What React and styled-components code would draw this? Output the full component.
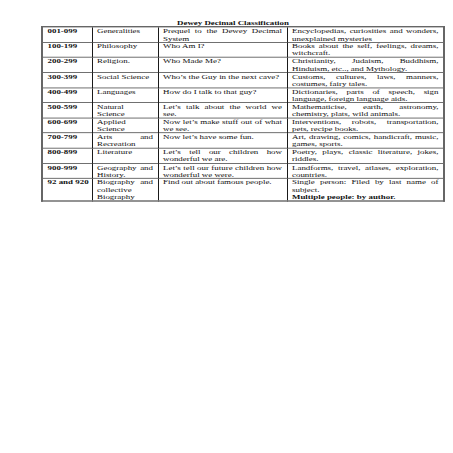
import React from "react";
import styled, { createGlobalStyle } from "styled-components";

const GlobalStyle = createGlobalStyle`
  html, body {
    margin: 0;
    padding: 0;
    background: #ffffff;
  }
`;

const Page = styled.div`
  width: 453px;
  height: 453px;
  padding: 19px 0 0 41px;
  box-sizing: border-box;
  overflow: hidden;
`;

// the source scan is squashed vertically, so the sheet is too
const Sheet = styled.div`
  width: 402px;
  transform: scaleY(0.7);
  transform-origin: top left;
  font-family: "Liberation Serif", "Times New Roman", serif;
  color: #111;
`;

const Title = styled.div`
  font-size: 8.9px;
  line-height: 10.3px;
  font-weight: bold;
  text-align: center;
  padding-right: 18px;
`;

const Table = styled.table`
  width: 402px;
  border-collapse: collapse;
  table-layout: fixed;
  border: 2px solid #666;
  font-size: 8.92px;
  line-height: 10.3px;
`;

const Col = styled.col`
  width: ${(props) => props.$w}px;
`;

const Cell = styled.td`
  border-left: 1px solid #1a1a1a;
  border-top: 1px solid #333;
  padding: 0 4.5px;
  vertical-align: top;
  text-align: justify;
  font-weight: ${(props) => (props.$bold ? "bold" : "normal")};
  white-space: ${(props) => (props.$bold ? "nowrap" : "normal")};
`;

const Strong = styled.div`
  font-weight: bold;
`;

const rows = [
  ["001-099", "Generalities", "Prequel to the Dewey Decimal System", "Encyclopedias, curiosities and wonders, unexplained mysteries"],
  ["100-199", "Philosophy", "Who Am I?", "Books about the self, feelings, dreams, witchcraft."],
  ["200-299", "Religion.", "Who Made Me?", "Christianity, Judaism, Buddhism, Hinduism, etc.., and Mythology."],
  ["300-399", "Social Science", "Who\u2019s the Guy in the next cave?", "Customs, cultures, laws, manners, costumes, fairy tales."],
  ["400-499", "Languages", "How do I talk to that guy?", "Dictionaries, parts of speech, sign language, foreign language aids."],
  ["500-599", "Natural Science", "Let\u2019s talk about the world we see.", "Mathematicise, earth, astronomy, chemistry, plats, wild animals."],
  ["600-699", "Applied Science", "Now let\u2019s make stuff out of what we see.", "Interventions, robots, transportation, pets, recipe books."],
  ["700-799", "Arts and Recreation", "Now let\u2019s have some fun.", "Art, drawing, comics, handicraft, music, games, sports."],
  ["800-899", "Literature", "Let\u2019s tell our children how wonderful we are.", "Poetry, plays, classic literature, jokes, riddles."],
  ["900-999", "Geography and History.", "Let\u2019s tell our future children how wonderful we were.", "Landforms, travel, atlases, exploration, countries."],
];

const App = () => {
  return (
    <Page>
      <GlobalStyle />
      <Sheet>
        <Title>Dewey Decimal Classification</Title>
        <Table>
          <colgroup>
            <Col $w={50} />
            <Col $w={66} />
            <Col $w={129} />
            <Col $w={157} />
          </colgroup>
          <tbody>
            {rows.map((r) => (
              <tr key={r[0]}>
                <Cell $bold>{r[0]}</Cell>
                <Cell>{r[1]}</Cell>
                <Cell>{r[2]}</Cell>
                <Cell>{r[3]}</Cell>
              </tr>
            ))}
            <tr>
              <Cell $bold>92 and 920</Cell>
              <Cell>Biography and collective Biography</Cell>
              <Cell>Find out about famous people.</Cell>
              <Cell>
                <div>Single person: Filed by last name of subject.</div>
                <Strong>Multiple people: by author.</Strong>
              </Cell>
            </tr>
          </tbody>
        </Table>
      </Sheet>
    </Page>
  );
};

export default App;
